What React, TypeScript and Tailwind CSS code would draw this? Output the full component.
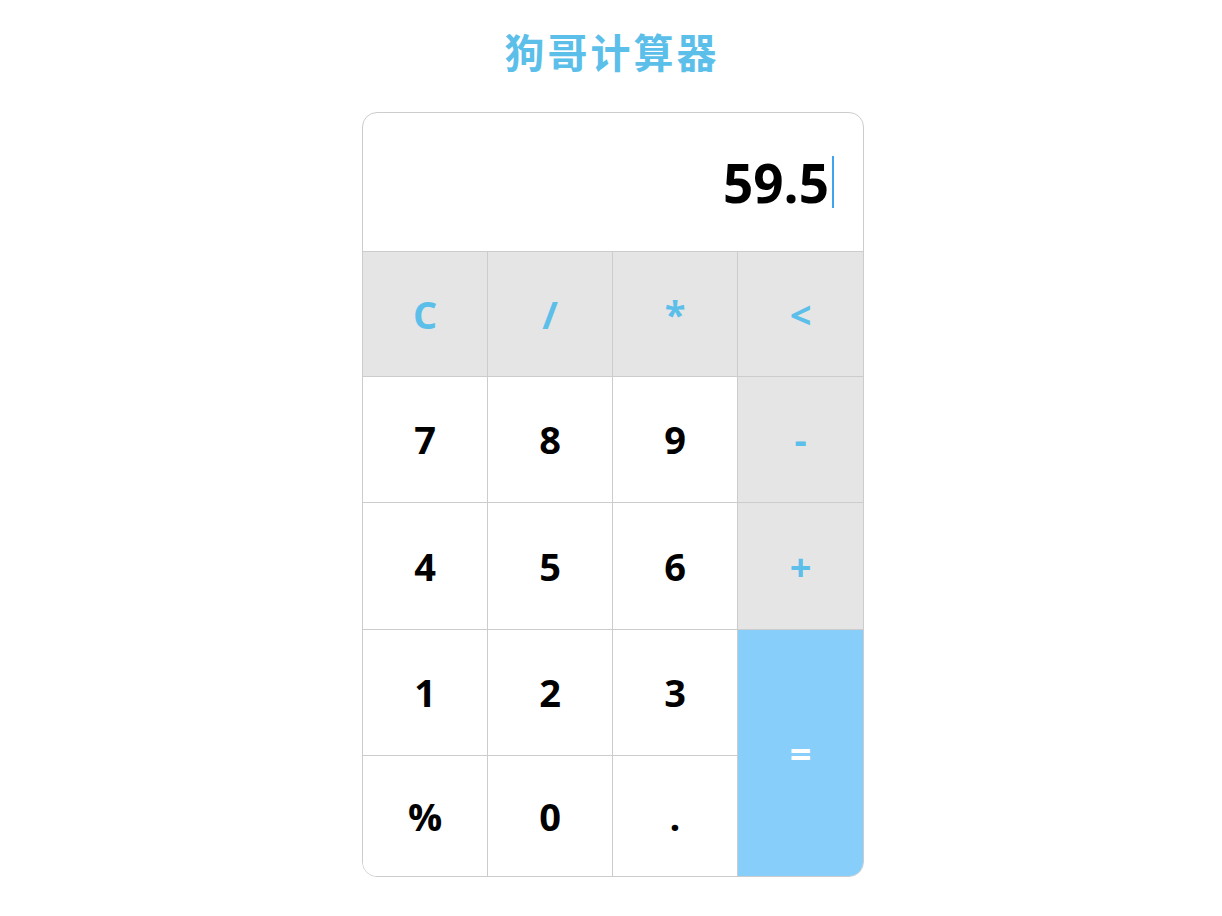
import React, { useState } from "react";

type Key = { label: string; kind: "op" | "num" | "eq" };

const keys: Key[] = [
  { label: "C", kind: "op" },
  { label: "/", kind: "op" },
  { label: "*", kind: "op" },
  { label: "<", kind: "op" },
  { label: "7", kind: "num" },
  { label: "8", kind: "num" },
  { label: "9", kind: "num" },
  { label: "-", kind: "op" },
  { label: "4", kind: "num" },
  { label: "5", kind: "num" },
  { label: "6", kind: "num" },
  { label: "+", kind: "op" },
  { label: "1", kind: "num" },
  { label: "2", kind: "num" },
  { label: "3", kind: "num" },
  { label: "=", kind: "eq" },
  { label: "%", kind: "num" },
  { label: "0", kind: "num" },
  { label: ".", kind: "num" },
];

export default function App() {
  const [value, setValue] = useState("59.5");

  const press = (k: string) => {
    if (k === "C") return setValue("");
    if (k === "<") return setValue((v) => v.slice(0, -1));
    if (k === "=") {
      try {
        // eslint-disable-next-line no-new-func
        const r = Function(`return (${value.replace(/%/g, "/100")})`)();
        setValue(String(r));
      } catch {
        setValue("Error");
      }
      return;
    }
    setValue((v) => v + k);
  };

  return (
    <div
      className="min-h-screen bg-white flex flex-col items-center"
      style={{ fontFamily: '"Open Sans", "Noto Sans CJK SC", sans-serif' }}
    >
      <h1 className="mt-[28px] ml-[2px] h-[50px] text-[40px] leading-[50px] font-bold tracking-[3px] text-[#5bbfea]">
        狗哥计算器
      </h1>
      <div className="mt-[34px] ml-[4px] w-[502px] border border-[#cccccc] rounded-[15px] overflow-hidden">
        <div className="h-[138px] flex items-center justify-end pr-[29px]">
          <span className="text-[53px] font-bold text-black leading-none">{value}</span>
          <span className="ml-[3px] w-[2px] h-[52px] bg-[#3fa4f0]" />
        </div>
        <div className="grid grid-cols-4 grid-rows-[125px_126px_127px_126px_121px]">
          {keys.map((k, i) => {
            const col = i < 16 ? i % 4 : (i - 16) % 4;
            let cls =
              "flex items-center justify-center border-t border-[#cccccc] text-[38px] font-bold cursor-pointer select-none";
            if (col !== 3 && k.kind !== "eq") cls += " border-r";
            if (k.kind === "op") cls += " bg-[#e5e5e5] text-[#5bbfea]";
            if (k.kind === "num") cls += " bg-white text-black";
            if (k.kind === "eq") cls += " row-span-2 bg-[#87cefa] text-white";
            return (
              <div key={k.label} className={cls} onClick={() => press(k.label)}>
                {k.label}
              </div>
            );
          })}
        </div>
      </div>
    </div>
  );
}
